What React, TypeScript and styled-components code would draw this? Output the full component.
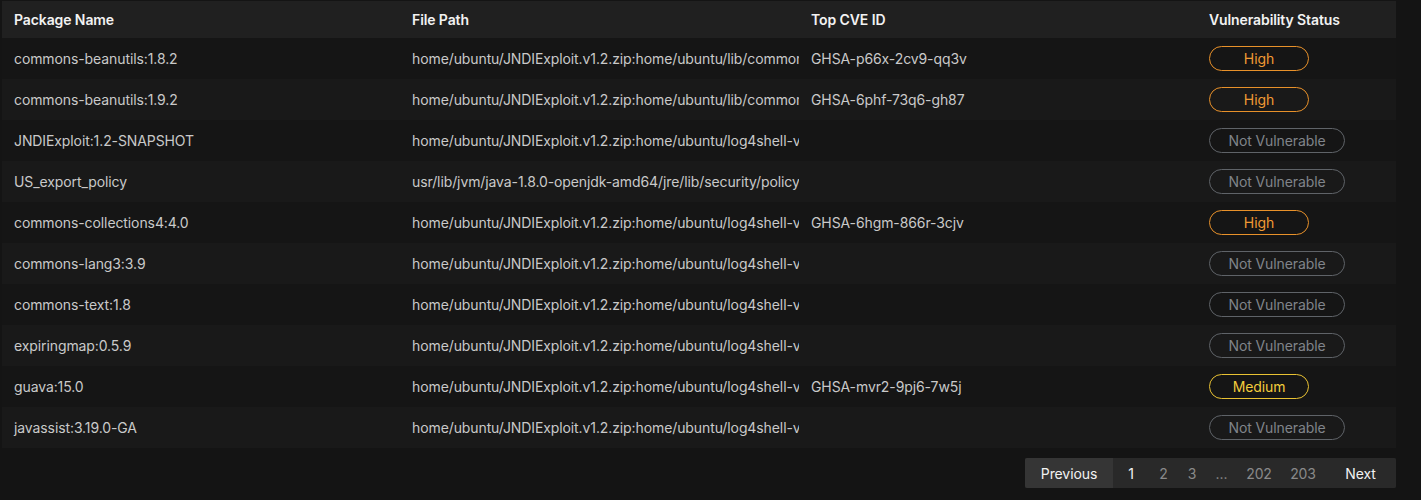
import React from "react";
import styled, { createGlobalStyle } from "styled-components";

const Global = createGlobalStyle`
  html, body { margin: 0; padding: 0; background: #141414; }
  body { font-family: Inter, "Noto Sans", sans-serif; }
`;

const Page = styled.div`
  width: 1421px;
  height: 500px;
  background: #141414;
  padding: 1px 25px 0 2px;
  box-sizing: border-box;
  display: flex;
  flex-direction: column;
`;

const Table = styled.div`
  display: grid;
  grid-template-columns: 398px 399px 398px 199px;
  width: 1394px;
`;

const HeaderCell = styled.div`
  background: #202020;
  height: 37px;
  display: flex;
  align-items: center;
  padding-left: 12px;
  color: #f2f2f2;
  font-weight: 600;
  font-size: 14px;
  letter-spacing: -0.1px;
`;

const Cell = styled.div<{ $alt: boolean }>`
  background: ${(p) => (p.$alt ? "#191919" : "#151515")};
  height: 41px;
  display: flex;
  align-items: center;
  padding-left: 12px;
  color: #c9c9c9;
  font-size: 14px;
  white-space: nowrap;
  overflow: hidden;
  letter-spacing: -0.1px;
`;

type Level = "High" | "Medium" | "Not Vulnerable";

const pillColors: Record<Level, { border: string; text: string; width: number }> = {
  High: { border: "#e8912a", text: "#f09a34", width: 100 },
  Medium: { border: "#e9c233", text: "#f2cc3c", width: 100 },
  "Not Vulnerable": { border: "#5f6368", text: "#80848a", width: 136 },
};

const Pill = styled.span<{ $level: Level }>`
  box-sizing: border-box;
  width: ${(p) => pillColors[p.$level].width}px;
  height: 25px;
  border-radius: 13px;
  border: 1px solid ${(p) => pillColors[p.$level].border};
  color: ${(p) => pillColors[p.$level].text};
  display: inline-flex;
  align-items: center;
  justify-content: center;
  font-size: 14px;
`;

const Footer = styled.div`
  display: flex;
  justify-content: flex-end;
  width: 1394px;
  margin-top: 10px;
`;

const Pager = styled.div`
  display: flex;
  height: 30px;
  background: #272727;
  border-radius: 2px;
  overflow: hidden;
`;

const PagerButton = styled.div<{ $active?: boolean; $nav?: "prev" | "next"; $w: number }>`
  width: ${(p) => p.$w}px;
  display: flex;
  align-items: center;
  justify-content: center;
  font-size: 14px;
  background: ${(p) => (p.$nav === "prev" ? "#353535" : "#292929")};
  color: ${(p) => (p.$nav || p.$active ? "#f2f2f2" : "#8a8a8a")};
  letter-spacing: -0.1px;
`;

const rows: { name: string; path: string; cve: string; status: Level }[] = [
  { name: "commons-beanutils:1.8.2", path: "home/ubuntu/JNDIExploit.v1.2.zip:home/ubuntu/lib/commons-beanutils-1.8.2.jar", cve: "GHSA-p66x-2cv9-qq3v", status: "High" },
  { name: "commons-beanutils:1.9.2", path: "home/ubuntu/JNDIExploit.v1.2.zip:home/ubuntu/lib/commons-beanutils-1.9.2.jar", cve: "GHSA-6phf-73q6-gh87", status: "High" },
  { name: "JNDIExploit:1.2-SNAPSHOT", path: "home/ubuntu/JNDIExploit.v1.2.zip:home/ubuntu/log4shell-vulnerable-app", cve: "", status: "Not Vulnerable" },
  { name: "US_export_policy", path: "usr/lib/jvm/java-1.8.0-openjdk-amd64/jre/lib/security/policy/US_export_policy.jar", cve: "", status: "Not Vulnerable" },
  { name: "commons-collections4:4.0", path: "home/ubuntu/JNDIExploit.v1.2.zip:home/ubuntu/log4shell-vulnerable-app", cve: "GHSA-6hgm-866r-3cjv", status: "High" },
  { name: "commons-lang3:3.9", path: "home/ubuntu/JNDIExploit.v1.2.zip:home/ubuntu/log4shell-vulnerable-app", cve: "", status: "Not Vulnerable" },
  { name: "commons-text:1.8", path: "home/ubuntu/JNDIExploit.v1.2.zip:home/ubuntu/log4shell-vulnerable-app", cve: "", status: "Not Vulnerable" },
  { name: "expiringmap:0.5.9", path: "home/ubuntu/JNDIExploit.v1.2.zip:home/ubuntu/log4shell-vulnerable-app", cve: "", status: "Not Vulnerable" },
  { name: "guava:15.0", path: "home/ubuntu/JNDIExploit.v1.2.zip:home/ubuntu/log4shell-vulnerable-app", cve: "GHSA-mvr2-9pj6-7w5j", status: "Medium" },
  { name: "javassist:3.19.0-GA", path: "home/ubuntu/JNDIExploit.v1.2.zip:home/ubuntu/log4shell-vulnerable-app", cve: "", status: "Not Vulnerable" },
];

export default function App() {
  return (
    <Page>
      <Global />
      <Table>
        <HeaderCell>Package Name</HeaderCell>
        <HeaderCell>File Path</HeaderCell>
        <HeaderCell>Top CVE ID</HeaderCell>
        <HeaderCell>Vulnerability Status</HeaderCell>
        {rows.map((r, i) => {
          const alt = i % 2 === 1;
          return (
            <React.Fragment key={r.name}>
              <Cell $alt={alt}>{r.name}</Cell>
              <Cell $alt={alt}>{r.path}</Cell>
              <Cell $alt={alt}>{r.cve}</Cell>
              <Cell $alt={alt}>
                <Pill $level={r.status}>{r.status}</Pill>
              </Cell>
            </React.Fragment>
          );
        })}
      </Table>
      <Footer>
        <Pager>
          <PagerButton $nav="prev" $w={88}>Previous</PagerButton>
          <PagerButton $active $w={36}>1</PagerButton>
          <PagerButton $w={29}>2</PagerButton>
          <PagerButton $w={28}>3</PagerButton>
          <PagerButton $w={31}>...</PagerButton>
          <PagerButton $w={44}>202</PagerButton>
          <PagerButton $w={44}>203</PagerButton>
          <PagerButton $nav="next" $w={71}>Next</PagerButton>
        </Pager>
      </Footer>
    </Page>
  );
}
